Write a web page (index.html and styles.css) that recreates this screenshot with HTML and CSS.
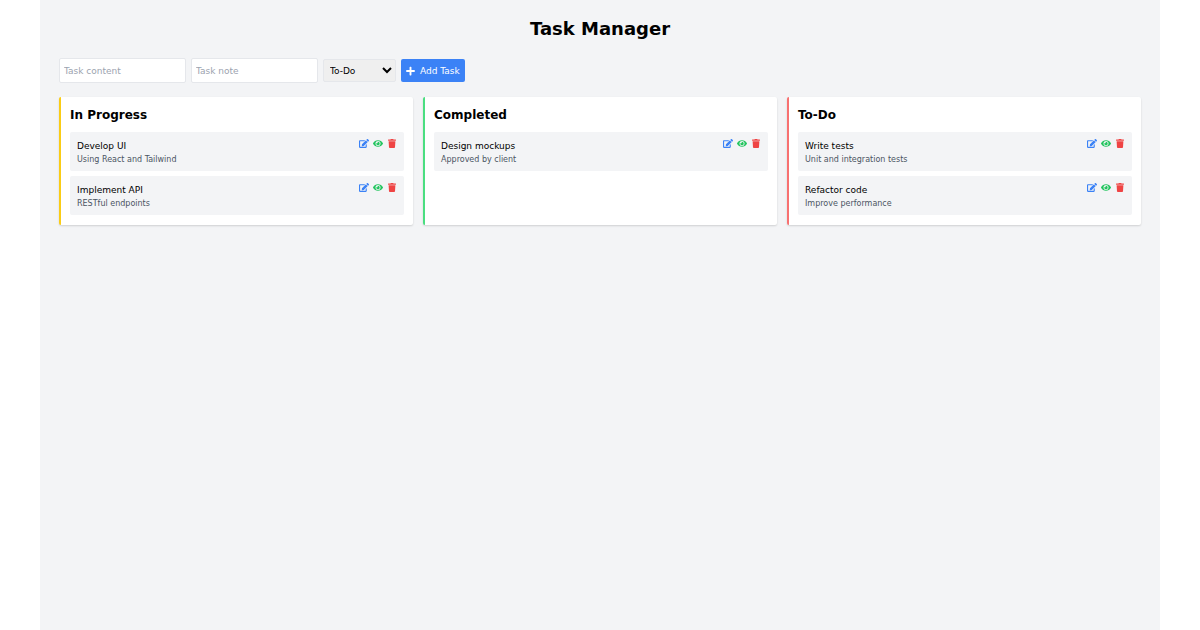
FILE: index.html
```
<!DOCTYPE html>
<html lang="en">
<head>
    <meta charset="UTF-8">
    <meta name="viewport" content="width=device-width, initial-scale=1.0">
    <title>Task Manager</title>
    <link rel="stylesheet" href="styles.css">
</head>
<body>

    <!-- Icons shared by the buttons -->
    <svg class="sprite" aria-hidden="true">
        <symbol id="icon-plus" viewBox="0 0 448 512">
            <path d="M416 208H272V64c0-17.700-14.300-32-32-32h-32c-17.700 0-32 14.300-32 32v144H32c-17.700 0-32 14.300-32 32v32c0 17.700 14.300 32 32 32h144v144c0 17.700 14.300 32 32 32h32c17.700 0 32-14.300 32-32V304h144c17.700 0 32-14.300 32-32v-32c0-17.700-14.300-32-32-32z"/>
        </symbol>
        <symbol id="icon-edit" viewBox="0 0 576 512">
            <path d="M402.600 83.200l90.200 90.200c3.800 3.800 3.800 10 0 13.800L274.400 405.600l-92.800 10.300c-12.400 1.400-22.900-9.100-21.500-21.500l10.300-92.800L388.800 83.200c3.800-3.800 10-3.800 13.800 0zm162-22.900l-48.800-48.800c-15.200-15.200-39.900-15.200-55.200 0l-35.400 35.400c-3.800 3.800-3.800 10 0 13.800l90.200 90.200c3.800 3.800 10 3.800 13.800 0l35.400-35.400c15.200-15.300 15.200-40 0-55.200zM384 346.200V448H64V128h229.800c3.200 0 6.200-1.300 8.500-3.500l40-40c7.600-7.600 2.200-20.500-8.500-20.500H48C21.500 64 0 85.500 0 112v352c0 26.500 21.500 48 48 48h352c26.500 0 48-21.500 48-48V306.200c0-10.700-12.900-16-20.500-8.500l-40 40c-2.200 2.300-3.500 5.300-3.500 8.500z"/>
        </symbol>
        <symbol id="icon-view" viewBox="0 0 576 512">
            <path d="M572.500 241.400C518.300 135.600 410.900 64 288 64S57.700 135.600 3.500 241.400a32.400 32.400 0 0 0 0 29.200C57.700 376.400 165.100 448 288 448s230.300-71.600 284.500-177.400a32.400 32.400 0 0 0 0-29.200zM288 400a144 144 0 1 1 144-144 143.900 143.900 0 0 1-144 144zm0-240a95.300 95.300 0 0 0-25.300 3.800 47.900 47.900 0 0 1-66.900 66.900A95.800 95.800 0 1 0 288 160z"/>
        </symbol>
        <symbol id="icon-delete" viewBox="0 0 448 512">
            <path d="M432 32H312l-9.400-18.700A24 24 0 0 0 281.100 0H166.800a23.700 23.700 0 0 0-21.400 13.300L136 32H16A16 16 0 0 0 0 48v32a16 16 0 0 0 16 16h416a16 16 0 0 0 16-16V48a16 16 0 0 0-16-16zM53.200 467a48 48 0 0 0 47.900 45h245.800a48 48 0 0 0 47.900-45L416 128H32z"/>
        </symbol>
    </svg>

    <div class="container">
        <h1>Task Manager</h1>

        <form class="task-form" onsubmit="return false;">
            <input type="text" id="taskContent" placeholder="Task content" aria-label="Task content">
            <input type="text" id="taskNote" placeholder="Task note" aria-label="Task note">
            <select id="taskStatus" aria-label="Status">
                <option>To-Do</option>
                <option>In Progress</option>
                <option>Completed</option>
            </select>
            <button type="submit" class="add-button"><svg class="icon"><use href="#icon-plus"/></svg>Add Task</button>
        </form>

        <div class="board">
            <section class="column in-progress">
                <h2>In Progress</h2>
                <div class="task">
                    <div>
                        <p class="task-title">Develop UI</p>
                        <p class="task-note">Using React and Tailwind</p>
                    </div>
                    <div class="actions">
                        <button class="edit" aria-label="Edit"><svg class="icon"><use href="#icon-edit"/></svg></button>
                        <button class="view" aria-label="View"><svg class="icon"><use href="#icon-view"/></svg></button>
                        <button class="delete" aria-label="Delete"><svg class="icon"><use href="#icon-delete"/></svg></button>
                    </div>
                </div>
                <div class="task">
                    <div>
                        <p class="task-title">Implement API</p>
                        <p class="task-note">RESTful endpoints</p>
                    </div>
                    <div class="actions">
                        <button class="edit" aria-label="Edit"><svg class="icon"><use href="#icon-edit"/></svg></button>
                        <button class="view" aria-label="View"><svg class="icon"><use href="#icon-view"/></svg></button>
                        <button class="delete" aria-label="Delete"><svg class="icon"><use href="#icon-delete"/></svg></button>
                    </div>
                </div>
            </section>

            <section class="column completed">
                <h2>Completed</h2>
                <div class="task">
                    <div>
                        <p class="task-title">Design mockups</p>
                        <p class="task-note">Approved by client</p>
                    </div>
                    <div class="actions">
                        <button class="edit" aria-label="Edit"><svg class="icon"><use href="#icon-edit"/></svg></button>
                        <button class="view" aria-label="View"><svg class="icon"><use href="#icon-view"/></svg></button>
                        <button class="delete" aria-label="Delete"><svg class="icon"><use href="#icon-delete"/></svg></button>
                    </div>
                </div>
            </section>

            <section class="column todo">
                <h2>To-Do</h2>
                <div class="task">
                    <div>
                        <p class="task-title">Write tests</p>
                        <p class="task-note">Unit and integration tests</p>
                    </div>
                    <div class="actions">
                        <button class="edit" aria-label="Edit"><svg class="icon"><use href="#icon-edit"/></svg></button>
                        <button class="view" aria-label="View"><svg class="icon"><use href="#icon-view"/></svg></button>
                        <button class="delete" aria-label="Delete"><svg class="icon"><use href="#icon-delete"/></svg></button>
                    </div>
                </div>
                <div class="task">
                    <div>
                        <p class="task-title">Refactor code</p>
                        <p class="task-note">Improve performance</p>
                    </div>
                    <div class="actions">
                        <button class="edit" aria-label="Edit"><svg class="icon"><use href="#icon-edit"/></svg></button>
                        <button class="view" aria-label="View"><svg class="icon"><use href="#icon-view"/></svg></button>
                        <button class="delete" aria-label="Delete"><svg class="icon"><use href="#icon-delete"/></svg></button>
                    </div>
                </div>
            </section>
        </div>
    </div>

</body>
</html>
```
FILE: styles.css
```
* {
    box-sizing: border-box;
}

body {
    margin: 0;
    background-color: #fff;
    color: #000;
    font-family: "DejaVu Sans", sans-serif;
    font-size: 9px;
    line-height: 14px;
}

h1, h2, p {
    margin: 0;
}

.sprite {
    display: none;
}

.icon {
    display: block;
    width: 10px;
    height: 9px;
    fill: currentColor;
}

.container {
    min-height: 100vh;
    margin: 0 40px;
    padding: 18px 19px;
    background-color: #f3f4f6;
}

h1 {
    margin-bottom: 18px;
    font-size: 18px;
    line-height: 22px;
    text-align: center;
}

.task-form {
    display: flex;
    align-items: center;
    gap: 5px;
    margin-bottom: 14px;
}

.task-form input,
.task-form select {
    border: 1px solid #e5e7eb;
    border-radius: 2px;
    font: inherit;
}

.task-form input {
    width: 127px;
    height: 25px;
    padding: 0 4px;
    background-color: #fff;
}

.task-form input::placeholder {
    color: #9ca3af;
}

.task-form select {
    width: 73px;
    height: 23px;
    padding: 0 2px;
    background-color: #efefef;
    color: #000;
}

.add-button {
    display: flex;
    align-items: center;
    gap: 5px;
    height: 23px;
    padding: 0 5px;
    border: none;
    border-radius: 2px;
    background-color: #3b82f6;
    color: #fff;
    font: inherit;
    cursor: pointer;
}

.add-button .icon {
    width: 9px;
    height: 10px;
}

.board {
    display: grid;
    grid-template-columns: repeat(3, 1fr);
    gap: 10px;
}

.column {
    padding: 9px 9px 10px;
    border-left: 2px solid;
    border-radius: 2px;
    background-color: #fff;
    box-shadow: 0 1px 2px rgba(0, 0, 0, 0.15);
}

.in-progress {
    border-color: #facc15;
}

.completed {
    border-color: #4ade80;
}

.todo {
    border-color: #f87171;
}

h2 {
    margin-bottom: 7px;
    font-size: 12px;
    line-height: 19px;
}

.task {
    display: flex;
    justify-content: space-between;
    align-items: flex-start;
    padding: 7px 7px 5px;
    border-radius: 2px;
    background-color: #f3f4f6;
}

.task + .task {
    margin-top: 5px;
}

.task-title {
    line-height: 15px;
}

.task-note {
    color: #4b5563;
    font-size: 8px;
    line-height: 12px;
}

.actions {
    display: flex;
    gap: 4px;
}

.actions button {
    padding: 0;
    border: none;
    background: none;
    cursor: pointer;
}

.edit {
    color: #3b82f6;
}

.view {
    color: #22c55e;
}

.delete {
    color: #ef4444;
}
```
